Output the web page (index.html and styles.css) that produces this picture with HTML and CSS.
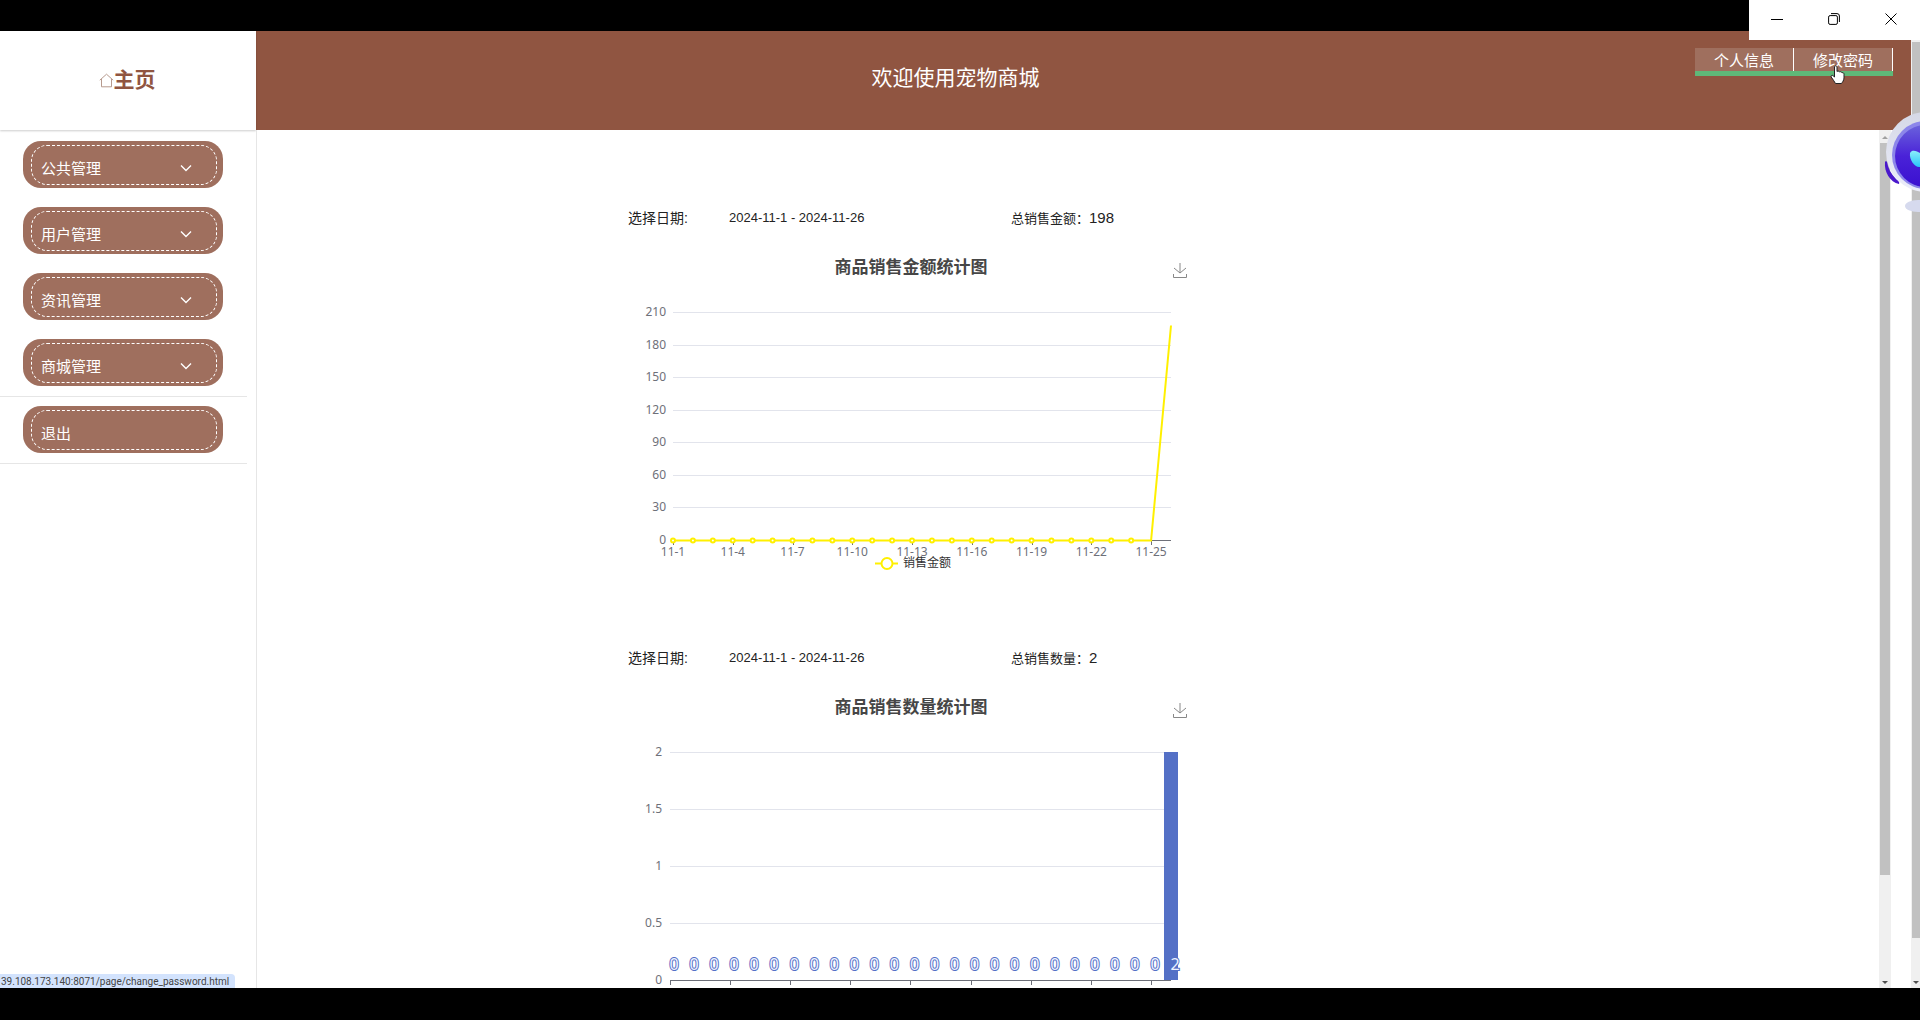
FILE: index.html
```html
<!DOCTYPE html>
<html lang="zh-CN">
<head>
    <meta charset="UTF-8">
    <meta name="viewport" content="width=device-width, initial-scale=1.0">
    <title>宠物商城</title>
    <link rel="stylesheet" href="styles.css">
</head>
<body>
    <div class="window-controls">
        <button type="button" aria-label="最小化">
            <svg width="12" height="12" viewBox="0 0 12 12"><path d="M0 6.5H12"/></svg>
        </button>
        <button type="button" aria-label="还原">
            <svg width="12" height="12" viewBox="0 0 12 12"><rect x="0.6" y="2.6" width="8.8" height="8.8" rx="1.5"/><path d="M3 0.6H9a2.4 2.4 0 0 1 2.4 2.4V9"/></svg>
        </button>
        <button type="button" aria-label="关闭">
            <svg width="12" height="12" viewBox="0 0 12 12"><path d="M0.5 0.5L11.5 11.5M11.5 0.5L0.5 11.5"/></svg>
        </button>
    </div>

    <div class="page">
        <div class="view">
            <header class="header">
                <a class="logo" href="#">
                    <svg width="15" height="15" viewBox="0 0 15 15"><path d="M0.8 7.2L7.5 1.2L14.2 7.2M2.5 6V13.8H12.5V6"/></svg>
                    <span>主页</span>
                </a>
                <h1 class="title">欢迎使用宠物商城</h1>
                <nav class="user-nav">
                    <a href="#">个人信息</a>
                    <a href="#">修改密码</a>
                </nav>
            </header>

            <div class="body">
                <aside class="sidebar">
                    <ul class="menu">
                        <li><button type="button" class="menu-item"><span>公共管理<svg width="12" height="8" viewBox="0 0 12 8"><path d="M1 1.5L6 6.5L11 1.5"/></svg></span></button></li>
                        <li><button type="button" class="menu-item"><span>用户管理<svg width="12" height="8" viewBox="0 0 12 8"><path d="M1 1.5L6 6.5L11 1.5"/></svg></span></button></li>
                        <li><button type="button" class="menu-item"><span>资讯管理<svg width="12" height="8" viewBox="0 0 12 8"><path d="M1 1.5L6 6.5L11 1.5"/></svg></span></button></li>
                        <li><button type="button" class="menu-item"><span>商城管理<svg width="12" height="8" viewBox="0 0 12 8"><path d="M1 1.5L6 6.5L11 1.5"/></svg></span></button></li>
                    </ul>
                    <hr>
                    <button type="button" class="menu-item"><span>退出</span></button>
                    <hr>
                </aside>

                <main class="content">
                    <section class="panel">
                        <div class="info">
                            <label for="date-amount">选择日期:</label>
                            <input type="text" id="date-amount" value="2024-11-1 - 2024-11-26">
                            <p>总销售金额：<span>198</span></p>
                        </div>
                        <svg class="chart" id="amount-chart" width="560" height="360"></svg>
                    </section>
                    <section class="panel">
                        <div class="info">
                            <label for="date-count">选择日期:</label>
                            <input type="text" id="date-count" value="2024-11-1 - 2024-11-26">
                            <p>总销售数量：<span>2</span></p>
                        </div>
                        <svg class="chart" id="count-chart" width="560" height="360"></svg>
                    </section>
                </main>

                <div class="scrollbar inner-scroll">
                    <svg width="6" height="3"><path d="M0 3L3 0L6 3z"/></svg>
                    <div class="track"><div class="thumb"></div></div>
                    <svg class="down" width="6" height="3"><path d="M0 0H6L3 3z"/></svg>
                </div>
            </div>
        </div>

        <div class="scrollbar outer-scroll">
            <div class="track"><div class="thumb"></div></div>
            <svg class="down" width="6" height="3"><path d="M0 0H6L3 3z"/></svg>
        </div>

        <div class="status">39.108.173.140:8071/page/change_password.html</div>
    </div>

    <!-- assistant robot at the window edge -->
    <svg class="robot" width="36" height="104" viewBox="0 0 36 104">
        <defs>
            <linearGradient id="face" x1="0" y1="0" x2="0" y2="1">
                <stop offset="0" stop-color="#6a62dc"/>
                <stop offset="0.5" stop-color="#4a22d8"/>
                <stop offset="1" stop-color="#3a10d0"/>
            </linearGradient>
            <linearGradient id="shell" x1="0" y1="0" x2="0" y2="1">
                <stop offset="0" stop-color="#d5d8e6"/>
                <stop offset="1" stop-color="#eceefa"/>
            </linearGradient>
            <linearGradient id="eye" x1="0" y1="0" x2="0" y2="1">
                <stop offset="0" stop-color="#8ceefa"/>
                <stop offset="1" stop-color="#28c4fa"/>
            </linearGradient>
        </defs>
        <circle cx="42" cy="42" r="40" fill="url(#shell)"/>
        <path d="M1 52C0 62 6 72 15 74C16 72 14 71 12 69C7 64 4 58 3 52C3 51 1 51 1 52z" fill="#4a18cc"/>
        <circle cx="42" cy="45" r="34" fill="#8c86ea"/>
        <circle cx="42" cy="46" r="31" fill="url(#face)"/>
        <path d="M26 43C28 39 33 41 36 43V57C31 58 25 50 26 43z" fill="url(#eye)"/>
        <ellipse cx="34" cy="96" rx="13" ry="6" fill="#d6daee"/>
    </svg>

    <svg class="cursor" width="16" height="20" viewBox="0 0 16 20">
        <path d="M4.5 1.5C5 0.6 6.5 0.6 7 1.8V6.5C8 5.8 9 6 9.5 7C10.5 6.4 11.5 6.8 12 7.8C13 7.4 14 8 14 9.2V13C14 15.5 12 17.6 11.5 18.5H5.5C4.5 16.5 2.5 14 1.2 12C0.6 10.8 2 9.8 3 10.6L4.5 12z" fill="#fff" stroke="#222"/>
    </svg>

    <script src="charts.js"></script>
</body>
</html>
```
FILE: styles.css
```css
* {
    box-sizing: border-box;
}

body {
    margin: 0;
    height: 100vh;
    padding: 31px 0 32px;
    background: #000;
    color: #222;
    font-family: "Liberation Sans", "Noto Sans CJK SC", sans-serif;
    font-size: 14px;
    overflow: hidden;
}

a {
    text-decoration: none;
}

button {
    border: none;
    padding: 0;
    font-family: inherit;
    cursor: pointer;
}

.window-controls {
    position: absolute;
    top: 0;
    right: 0;
    z-index: 2;
    display: flex;
    height: 40px;
    background: #fff;
}

.window-controls button {
    display: flex;
    align-items: center;
    justify-content: center;
    width: 57px;
    padding: 0 2px 2px 0;
    background: none;
}

.window-controls svg {
    fill: none;
    stroke: #000;
}

.page {
    position: relative;
    display: flex;
    height: 100%;
    background: #fff;
    overflow: hidden;
}

.view {
    flex: 1;
    display: flex;
    flex-direction: column;
    min-width: 0;
}

/* header */
.header {
    display: grid;
    grid-template-columns: 256px 1fr 256px;
    height: 99px;
    flex-shrink: 0;
    background: #905541;
}

.logo {
    display: flex;
    align-items: center;
    justify-content: center;
    padding: 0 2px 6px 0;
    background: #fff;
    box-shadow: 0 1px 2px rgba(0, 0, 0, 0.2);
    color: #905541;
    font-size: 21px;
    font-weight: bold;
}

.logo svg {
    fill: none;
    stroke: #b79a8e;
    margin-top: 5px;
}

.title {
    margin: 0;
    line-height: 93px;
    text-align: center;
    color: #fff;
    font-size: 21px;
    font-weight: normal;
}

.user-nav {
    display: flex;
    align-self: start;
    justify-self: end;
    margin: 17px 18px 0 0;
    border-bottom: 5px solid #5fb878;
}

.user-nav a {
    width: 99px;
    height: 23px;
    line-height: 25px;
    border-right: 1px solid #fff;
    background: #9f6f5e;
    color: #fff;
    font-size: 15px;
    text-align: center;
}

.body {
    flex: 1;
    display: flex;
    min-height: 0;
}

/* sidebar */
.sidebar {
    width: 257px;
    flex-shrink: 0;
    padding: 11px 9px 0 0;
    border-right: 1px solid #e6e6e6;
}

.sidebar hr {
    margin: 10px 0 9px;
    border: none;
    border-top: 1px solid #e6e6e6;
}

.menu {
    display: grid;
    gap: 19px;
    margin: 0;
    padding: 0;
    list-style: none;
}

.menu-item {
    display: block;
    width: 200px;
    height: 47px;
    margin-left: 23px;
    padding: 4px 6px 3px 8px;
    border-radius: 18px;
    background: #9f6f5e;
    color: #fff;
    font-size: 15px;
}

.menu-item span {
    display: flex;
    align-items: center;
    justify-content: space-between;
    height: 100%;
    padding: 5px 24px 0 9px;
    border: 1px dashed #fff;
    border-radius: 16px;
}

.menu-item svg {
    fill: none;
    stroke: #fff;
    stroke-width: 1.4;
}

/* charts */
.content {
    flex: 1;
    min-width: 0;
    padding: 77px 0 0 371px;
    overflow: hidden;
}

.panel {
    height: 440px;
}

.info {
    display: grid;
    grid-template-columns: 101px 282px 1fr;
    align-items: center;
    height: 20px;
    margin-bottom: 2px;
}

.info input {
    width: 200px;
    padding: 0;
    border: none;
    background: none;
    color: #222;
    font-family: inherit;
    font-size: 13px;
}

.info p {
    margin: 0;
    font-size: 13px;
}

.info span {
    font-size: 15px;
}

.chart {
    display: block;
    overflow: visible;
    font-family: "Noto Sans", "Noto Sans CJK SC", sans-serif;
}

.chart-title {
    fill: #464646;
    font-size: 17px;
    font-weight: bold;
    text-anchor: middle;
}

.grid-line {
    stroke: #e2e4ec;
}

.axis-line {
    stroke: #6e7079;
}

.axis-text {
    fill: #6e7079;
    font-size: 12px;
}

.y-text {
    text-anchor: end;
}

.x-text {
    text-anchor: middle;
}

.download {
    fill: none;
    stroke: #888;
}

.sales-line {
    fill: none;
    stroke: #fff000;
    stroke-width: 2;
}

.sales-dot {
    fill: #fff;
    stroke: #fff000;
    stroke-width: 2;
}

.legend-text {
    fill: #333;
    font-size: 12px;
}

.bar {
    fill: #5470c6;
}

.bar-text {
    fill: #eef2ff;
    stroke: #5470c6;
    stroke-width: 2;
    paint-order: stroke;
    font-size: 16px;
    text-anchor: middle;
}

/* scrollbars */
.scrollbar {
    display: flex;
    flex-direction: column;
    align-items: center;
    flex-shrink: 0;
    background: #f0f0f0;
}

.scrollbar svg {
    margin: 6px 0 4px;
    fill: #a0a0a0;
}

.scrollbar .down {
    fill: #505050;
}

.track {
    flex: 1;
    align-self: stretch;
}

.thumb {
    background: #c1c1c1;
}

.inner-scroll {
    width: 12px;
    margin-right: 20px;
}

.inner-scroll .thumb {
    height: 88%;
    margin: 0 1px;
}

.outer-scroll {
    width: 9px;
    padding-top: 11px;
}

.outer-scroll .thumb {
    height: 96%;
    margin-left: 1px;
}

.status {
    position: absolute;
    left: 0;
    bottom: 0;
    height: 14px;
    padding: 0 6px 0 1px;
    border-radius: 0 4px 0 0;
    background: #d3e3fd;
    color: #444;
    font-family: Roboto, sans-serif;
    font-size: 10px;
    line-height: 16px;
    overflow: hidden;
}

.robot {
    position: absolute;
    top: 110px;
    right: 0;
}

.cursor {
    position: absolute;
    top: 65px;
    right: 74px;
}
```
FILE: charts.js
```javascript
const DAYS = 26;
const LEFT = 45;
const RIGHT = 543;
const TOP = 83;
const BOTTOM = 311;

const amounts = new Array(DAYS).fill(0);
amounts[25] = 198;
const counts = new Array(DAYS).fill(0);
counts[25] = 2;

function add(svg, tag, attrs, text) {
    const el = document.createElementNS('http://www.w3.org/2000/svg', tag);
    for (const key in attrs) {
        el.setAttribute(key, attrs[key]);
    }
    if (text !== undefined) {
        el.textContent = text;
    }
    svg.appendChild(el);
    return el;
}

function drawFrame(svg, title, ticks, left, labelX) {
    const max = ticks[ticks.length - 1];
    add(svg, 'text', { x: 283, y: 44, class: 'chart-title' }, title);
    add(svg, 'path', { d: 'M552 34V44M546 39L552 44L558 39M545.5 45V48.5H558.5V45', class: 'download' });
    ticks.forEach(value => {
        const y = Math.round(BOTTOM - (BOTTOM - TOP) * value / max);
        add(svg, 'line', { x1: left, x2: RIGHT, y1: y + 0.5, y2: y + 0.5, class: value ? 'grid-line' : 'axis-line' });
        add(svg, 'text', { x: labelX, y: y + 4, class: 'axis-text y-text' }, value);
    });
}

function drawAmountChart() {
    const svg = document.getElementById('amount-chart');
    const step = (RIGHT - LEFT) / (DAYS - 1);
    drawFrame(svg, '商品销售金额统计图', [0, 30, 60, 90, 120, 150, 180, 210], LEFT, 38);

    const points = amounts.map((value, i) => [LEFT + i * step, BOTTOM + 0.5 - (BOTTOM - TOP) * value / 210]);
    for (let i = 0; i < DAYS; i += 3) {
        const x = Math.round(points[i][0]) + 0.5;
        add(svg, 'line', { x1: x, x2: x, y1: BOTTOM, y2: BOTTOM + 5, class: 'axis-line' });
        add(svg, 'text', { x: points[i][0], y: 327, class: 'axis-text x-text' }, '11-' + (i + 1));
    }
    add(svg, 'polyline', { points: points.join(' '), class: 'sales-line' });
    points.slice(0, 24).forEach(p => add(svg, 'circle', { cx: p[0], cy: p[1], r: 2, class: 'sales-dot' }));

    add(svg, 'path', { d: 'M247 334.5H270', class: 'sales-line' });
    add(svg, 'circle', { cx: 259, cy: 334.5, r: 5.5, class: 'sales-dot' });
    add(svg, 'text', { x: 275, y: 338, class: 'legend-text' }, '销售金额');
}

function drawCountChart() {
    const svg = document.getElementById('count-chart');
    const left = LEFT - 3;
    const step = (RIGHT - left) / (DAYS - 1);
    drawFrame(svg, '商品销售数量统计图', [0, 0.5, 1, 1.5, 2], left, 34);

    counts.forEach((value, i) => {
        const x = left + i * step;
        if (i % 3 === 0) {
            const tickX = Math.round(x) + 0.5;
            add(svg, 'line', { x1: tickX, x2: tickX, y1: BOTTOM, y2: BOTTOM + 5, class: 'axis-line' });
        }
        if (value) {
            const height = (BOTTOM - TOP) * value / 2;
            add(svg, 'rect', { x: Math.round(x) - 7, y: BOTTOM - height, width: 14, height: height, class: 'bar' });
        }
        add(svg, 'text', { x: x + 4, y: 301, class: 'bar-text' }, value);
    });
}

drawAmountChart();
drawCountChart();
```
